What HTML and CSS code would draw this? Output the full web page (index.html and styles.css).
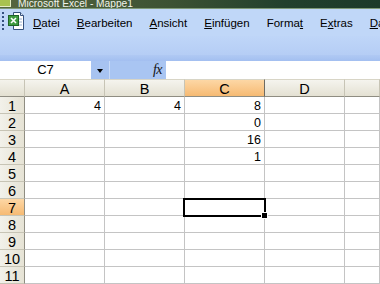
FILE: index.html
```html
<!DOCTYPE html>
<html>
<head>
<meta charset="utf-8">
<link rel="stylesheet" href="styles.css">
</head>
<body>
<div class="window">
  <div class="titlebar">
    <span class="app-icon"></span>
    <span class="title-text">Microsoft Excel - Mappe1</span>
  </div>
  <div class="menubar">
    <span class="grip"></span>
    <svg class="doc-icon" width="16" height="20" viewBox="0 0 16 20">
      <path d="M5.5 1.5 H12.5 L15.5 4.5 V18.5 H5.5 Z" fill="#ffffff" stroke="#36527f"/>
      <path d="M12.5 1.5 V4.5 H15.5" fill="#dfe7f3" stroke="#36527f"/>
      <path d="M8 8 H14 M8 11 H14 M8 14 H14" stroke="#9bb0d0"/>
      <rect x="0.5" y="4.5" width="10" height="10" fill="#3d9a3f" stroke="#1f6427"/>
      <path d="M3 7 L8 12 M8 7 L3 12" stroke="#ffffff" stroke-width="1.6"/>
    </svg>
    <nav class="menu">
      <span class="menu-item"><u>D</u>atei</span>
      <span class="menu-item"><u>B</u>earbeiten</span>
      <span class="menu-item"><u>A</u>nsicht</span>
      <span class="menu-item"><u>E</u>infügen</span>
      <span class="menu-item">Forma<u>t</u></span>
      <span class="menu-item">E<u>x</u>tras</span>
      <span class="menu-item"><u>D</u>aten</span>
    </nav>
  </div>
  <div class="toolbars"></div>
  <div class="band"></div>
  <div class="formulabar">
    <div class="namebox">C7</div>
    <div class="nb-drop"><span class="tri"></span></div>
    <div class="fx-area"><span class="fx">fx</span></div>
    <div class="formula-input"></div>
  </div>
  <div class="sheet">
    <div class="corner"></div>
    <div class="colhead">A</div>
    <div class="colhead">B</div>
    <div class="colhead sel">C</div>
    <div class="colhead">D</div>
    <div class="colhead"></div>

    <div class="rowhead">1</div><div class="cell">4</div><div class="cell">4</div><div class="cell">8</div><div class="cell"></div><div class="cell"></div>
    <div class="rowhead">2</div><div class="cell"></div><div class="cell"></div><div class="cell">0</div><div class="cell"></div><div class="cell"></div>
    <div class="rowhead">3</div><div class="cell"></div><div class="cell"></div><div class="cell">16</div><div class="cell"></div><div class="cell"></div>
    <div class="rowhead">4</div><div class="cell"></div><div class="cell"></div><div class="cell">1</div><div class="cell"></div><div class="cell"></div>
    <div class="rowhead">5</div><div class="cell"></div><div class="cell"></div><div class="cell"></div><div class="cell"></div><div class="cell"></div>
    <div class="rowhead">6</div><div class="cell"></div><div class="cell"></div><div class="cell"></div><div class="cell"></div><div class="cell"></div>
    <div class="rowhead sel">7</div><div class="cell"></div><div class="cell"></div><div class="cell active"><span class="outline"><span class="handle"></span></span></div><div class="cell"></div><div class="cell"></div>
    <div class="rowhead">8</div><div class="cell"></div><div class="cell"></div><div class="cell"></div><div class="cell"></div><div class="cell"></div>
    <div class="rowhead">9</div><div class="cell"></div><div class="cell"></div><div class="cell"></div><div class="cell"></div><div class="cell"></div>
    <div class="rowhead">10</div><div class="cell"></div><div class="cell"></div><div class="cell"></div><div class="cell"></div><div class="cell"></div>
    <div class="rowhead">11</div><div class="cell"></div><div class="cell"></div><div class="cell"></div><div class="cell"></div><div class="cell"></div>
  </div>
</div>
</body>
</html>
```

FILE: styles.css
```css
html, body {
  margin: 0;
  padding: 0;
  background: #ffffff;
}

.window {
  width: 380px;
  height: 284px;
  overflow: hidden;
  font-family: "Liberation Sans", Arial, sans-serif;
  color: #000000;
}

.titlebar {
  height: 9px;
  overflow: hidden;
  display: flex;
  align-items: flex-end;
  background: linear-gradient(to right, #56663f 0%, #3c5233 45%, #22402d 75%, #1c3a2a 100%);
  border-bottom: 1px solid #7f9a78;
  box-sizing: border-box;
}

.app-icon {
  flex-shrink: 0;
  width: 11px;
  height: 7px;
  margin-bottom: 1px;
  background: #a8c24f;
  border: 1px solid #e4edc3;
  border-top: none;
  border-left: none;
  box-sizing: border-box;
}

.title-text {
  margin-left: 7px;
  color: #f0f3ea;
  font-size: 10.2px;
  line-height: 10px;
  margin-bottom: -1px;
  white-space: nowrap;
}

.menubar {
  height: 27px;
  display: flex;
  align-items: flex-start;
  background: #c0d7f8;
  overflow: hidden;
}

.grip {
  flex-shrink: 0;
  width: 2px;
  height: 18px;
  margin: 3px 0 0 2px;
  background: repeating-linear-gradient(to bottom, #34507f 0 2px, transparent 2px 4px);
}

.doc-icon {
  flex-shrink: 0;
  margin: 2px 0 0 4px;
  display: block;
}

.menu {
  flex-shrink: 0;
  display: flex;
  gap: 17px;
  margin-left: 9px;
  padding-top: 7px;
}

.menu-item {
  flex-shrink: 0;
  font-size: 11.5px;
  line-height: 14px;
  white-space: nowrap;
}

.menu-item u {
  text-decoration: underline;
  text-underline-offset: 1px;
}

.toolbars {
  height: 19px;
  background: linear-gradient(#bfd6f8, #b5cdf5);
}

.band {
  height: 6px;
  background: linear-gradient(#b0c9f3, #a3bff0);
}

.formulabar {
  height: 18px;
  display: flex;
}

.namebox {
  width: 91px;
  background: #ffffff;
  text-align: center;
  font-size: 13px;
  line-height: 18px;
}

.nb-drop {
  width: 19px;
  background: #a7c3f1;
  display: flex;
  align-items: center;
  justify-content: center;
  border-right: 1px solid #c9dbf8;
  box-sizing: border-box;
}

.tri {
  width: 0;
  height: 0;
  border-left: 3.5px solid transparent;
  border-right: 3.5px solid transparent;
  border-top: 4px solid #000000;
  margin-top: 1px;
}

.fx-area {
  width: 56px;
  background: #a9c5f2;
  display: flex;
  justify-content: flex-end;
  align-items: center;
}

.fx {
  font-family: "Liberation Serif", "Times New Roman", serif;
  font-style: italic;
  font-size: 14px;
  letter-spacing: -0.5px;
  margin-right: 4px;
  color: #111111;
}

.formula-input {
  flex: 1;
  background: #ffffff;
}

.sheet {
  display: grid;
  grid-template-columns: 25px repeat(4, 80px) 1fr;
  grid-template-rows: 18px repeat(11, 17px);
}

.corner,
.colhead,
.rowhead,
.cell {
  box-sizing: border-box;
  overflow: hidden;
}

.corner {
  background: linear-gradient(#f4f3ec, #e3e0d1);
  border-right: 1px solid #c7c4b5;
  border-bottom: 1px solid #8f8d82;
  border-top: 1px solid #d8d5c6;
}

.colhead {
  background: linear-gradient(#f5f4ee, #e4e1d3);
  border-right: 1px solid #c7c4b5;
  border-bottom: 1px solid #8f8d82;
  border-top: 1px solid #d8d5c6;
  text-align: center;
  font-size: 14.5px;
  line-height: 16px;
  padding-top: 1px;
}

.colhead.sel {
  background: linear-gradient(#fdd7a5, #f6ba73);
  border-right-color: #6e6b62;
}

.rowhead {
  background: linear-gradient(to right, #f2f1ea, #e6e3d5);
  border-right: 1px solid #8f8d82;
  border-bottom: 1px solid #c7c4b5;
  text-align: center;
  font-size: 14.5px;
  line-height: 16px;
  padding-top: 1px;
}

.rowhead.sel {
  background: linear-gradient(#fdd7a5, #f6ba73);
}

.cell {
  border-right: 1px solid #c4c4c4;
  border-bottom: 1px solid #c4c4c4;
  text-align: right;
  font-size: 12.5px;
  line-height: 16px;
  padding: 1px 3px 0 0;
}

.cell.active {
  position: relative;
  overflow: visible;
}

.outline {
  position: absolute;
  left: -2px;
  top: -1px;
  width: 83px;
  height: 19px;
  border: 2px solid #000000;
  box-sizing: border-box;
  z-index: 2;
}

.handle {
  position: absolute;
  right: -4px;
  bottom: -4px;
  width: 5px;
  height: 5px;
  background: #000000;
  border: 1px solid #ffffff;
}
```
